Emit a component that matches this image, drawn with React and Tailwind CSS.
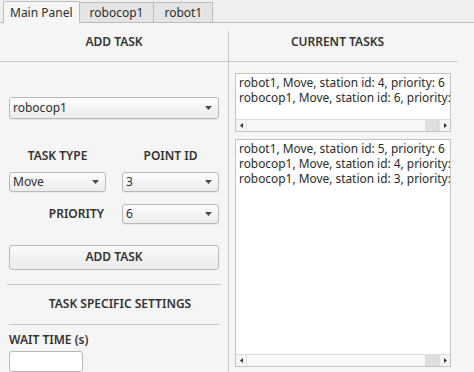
import React from 'react';

const font = { fontFamily: '"Noto Sans", "Open Sans", Arial, sans-serif' };

function Caret() {
  return (
    <svg width="7" height="4" viewBox="0 0 7 4" className="shrink-0">
      <path d="M0 0 L7 0 L3.5 4 Z" fill="#4a4a4a" />
    </svg>
  );
}

// combobox look-alike
function Combo({ value, className = '' }) {
  return (
    <div
      className={`flex h-[20px] items-center justify-between rounded-[3px] border border-[#b9b9b9] bg-gradient-to-b from-[#fdfdfd] to-[#ececec] pl-[3px] pr-[6px] text-[12px] text-[#2e2e2e] shadow-[0_1px_0_rgba(0,0,0,0.06)] ${className}`}
    >
      <span>{value}</span>
      <Caret />
    </div>
  );
}

function HScroll() {
  return (
    <div className="flex h-[12px] shrink-0 items-center border-t border-[#dcdcdc] bg-[#f4f4f4]">
      <div className="flex w-[10px] justify-center">
        <svg width="3" height="5" viewBox="0 0 3 5">
          <path d="M3 0 L3 5 L0 2.5 Z" fill="#333" />
        </svg>
      </div>
      <div className="flex h-full flex-1 justify-end border-x border-[#e2e2e2] bg-[#f8f8f8]">
        <div className="h-full w-[14px] bg-[#dedede]" />
      </div>
      <div className="flex w-[10px] justify-center">
        <svg width="3" height="5" viewBox="0 0 3 5">
          <path d="M0 0 L0 5 L3 2.5 Z" fill="#333" />
        </svg>
      </div>
    </div>
  );
}

function TaskList({ items, className = '' }) {
  return (
    <div className={`flex min-w-0 flex-col overflow-hidden border border-[#c4c4c4] bg-white ${className}`}>
      <div className="min-w-0 flex-1 overflow-hidden px-[3px] pt-[1px] text-[11.9px] leading-[15px] text-[#2a2a2a]">
        {items.map((t, i) => (
          <div key={i} className="whitespace-nowrap">
            {t}
          </div>
        ))}
      </div>
      <HScroll />
    </div>
  );
}

export default function App() {
  const tabs = ['Main Panel', 'robocop1', 'robot1'];

  return (
    <div style={font} className="flex h-[372px] w-[474px] flex-col overflow-hidden bg-[#efefef] text-[#333]">
      {/* Tabs */}
      <div className="flex h-[23px] shrink-0 items-end border-b border-[#bdbdbd] pl-[3px]">
        {tabs.map((t, i) => (
          <div
            key={t}
            className={
              i === 0
                ? 'relative -mb-px flex h-[22px] items-center rounded-t-[2px] border border-b-0 border-[#bdbdbd] bg-[#f6f6f6] px-[6px] text-[12px] text-[#2e2e2e]'
                : 'flex h-[20px] items-center border border-b-0 border-l-0 border-[#bdbdbd] bg-[#e4e4e4] px-[10px] text-[12px] text-[#2e2e2e]'
            }
          >
            {t}
          </div>
        ))}
      </div>

      <div className="flex min-h-0 flex-1 bg-[#f5f5f5]">
        {/* Left column */}
        <div className="flex w-[228px] shrink-0 flex-col">
          <div className="flex h-[39px] items-center justify-center border-b border-[#c8c8c8] text-[12px] font-semibold text-[#333]">
            ADD TASK
          </div>

          <div className="mt-[35px] px-[9px]">
            <Combo value="robocop1" className="h-[22px]" />
          </div>

          <div className="mt-[28px] grid grid-cols-2 gap-x-[16px] px-[9px]">
            <div className="text-center text-[12px] font-semibold">TASK TYPE</div>
            <div className="text-center text-[12px] font-semibold">POINT ID</div>
            <Combo value="Move" className="mt-[7px]" />
            <Combo value="3" className="mt-[7px]" />
            <div className="mt-[12px] flex items-center justify-end pr-[2px] text-[12px] font-semibold">PRIORITY</div>
            <Combo value="6" className="mt-[12px]" />
          </div>

          <div className="mx-[9px] mt-[21px] flex h-[25px] items-center justify-center rounded-[3px] border border-[#b9b9b9] bg-gradient-to-b from-[#fafafa] to-[#ebebeb] text-[12px] font-semibold">
            ADD TASK
          </div>

          <div className="mx-[7px] mt-[14px] border-t border-[#c8c8c8]" />
          <div className="flex h-[40px] items-center justify-center pl-[12px] text-[12px] font-semibold">
            TASK SPECIFIC SETTINGS
          </div>
          <div className="mx-[9px] border-t border-[#c8c8c8]" />

          <div className="mt-[6px] px-[9px] text-[12px] font-semibold">WAIT TIME (s)</div>
          <div className="ml-[9px] mt-[2px] h-[21px] w-[74px] rounded-[3px] border border-[#b9b9b9] bg-white" />
        </div>

        {/* Divider */}
        <div className="mt-[8px] w-px shrink-0 bg-[#c8c8c8]" />

        {/* Right column */}
        <div className="flex min-w-0 flex-1 flex-col">
          <div className="mr-[16px] flex h-[39px] shrink-0 items-center justify-center border-b border-[#c8c8c8] text-[12px] font-semibold">
            <span className="mr-[12px]">CURRENT TASKS</span>
          </div>
          <div className="flex min-h-0 min-w-0 flex-1 flex-col pl-[6px] pr-[23px] pt-[11px] pb-[5px]">
            <TaskList
              className="h-[59px] shrink-0"
              items={[
                'robot1, Move, station id: 4, priority: 6',
                'robocop1, Move, station id: 6, priority: 6',
              ]}
            />
            <TaskList
              className="mt-[7px] flex-1"
              items={[
                'robot1, Move, station id: 5, priority: 6',
                'robocop1, Move, station id: 4, priority: 6',
                'robocop1, Move, station id: 3, priority: 6',
              ]}
            />
          </div>
        </div>
      </div>
    </div>
  );
}
